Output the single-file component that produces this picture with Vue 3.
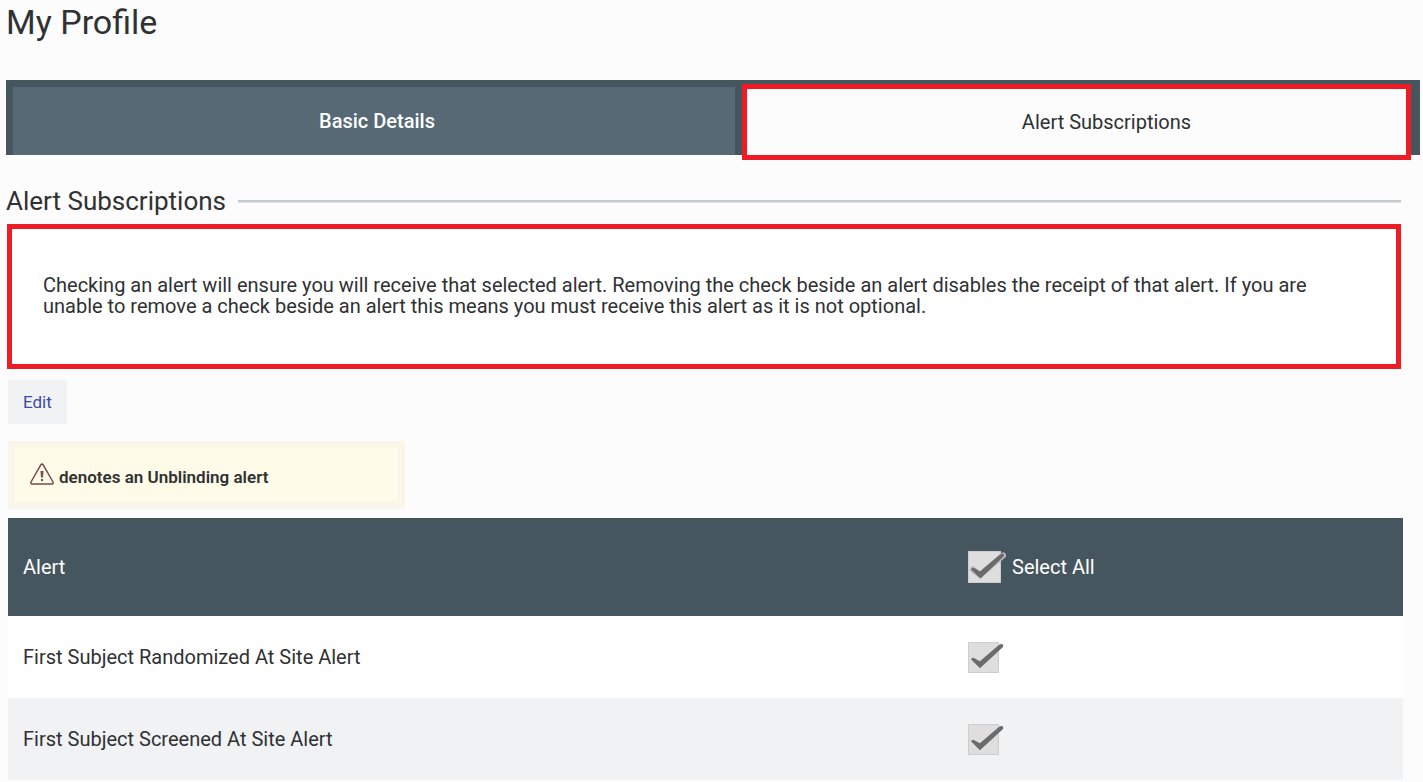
<script setup>
import { ref, computed } from 'vue'

const tabs = ['Basic Details', 'Alert Subscriptions']
const active = ref('Alert Subscriptions')

const alerts = ref([
  { id: 'randomized', name: 'First Subject Randomized At Site Alert', checked: true },
  { id: 'screened', name: 'First Subject Screened At Site Alert', checked: true },
])

const allChecked = computed({
  get: () => alerts.value.every((a) => a.checked),
  set: (value) => alerts.value.forEach((a) => (a.checked = value)),
})
</script>

<template>
  <main class="page">
    <h1>My Profile</h1>

    <nav class="tabs" aria-label="Profile sections">
      <button
        v-for="tab in tabs"
        :key="tab"
        type="button"
        class="tab"
        :class="{ active: tab === active }"
        @click="active = tab"
      >{{ tab }}</button>
    </nav>

    <section class="content">
      <h2>Alert Subscriptions</h2>

      <p class="info">
        Checking an alert will ensure you will receive that selected alert. Removing the check
        beside an alert disables the receipt of that alert. If you are unable to remove a check
        beside an alert this means you must receive this alert as it is not optional.
      </p>

      <button type="button" class="edit">Edit</button>

      <div class="legend">
        <svg viewBox="0 0 24 22" width="24" height="22" aria-hidden="true">
          <path d="M10.8 1.8 Q12 0.2 13.2 1.8 L23 19 Q23.6 20.8 22 20.9 H2 Q0.4 20.8 1 19 Z" fill="none" stroke="#7b4a48" stroke-width="1.5" stroke-linejoin="round" />
          <path d="M10.5 8 H13.5 L13 14.6 H11 Z" fill="#7b4a48" />
          <rect x="11" y="16" width="2" height="2" fill="#7b4a48" />
        </svg>
        <span>denotes an Unblinding alert</span>
      </div>

      <table>
        <thead>
          <tr>
            <th scope="col">Alert</th>
            <th scope="col" class="select">
              <label class="check large">
                <span class="box">
                  <input v-model="allChecked" type="checkbox" />
                  <svg v-if="allChecked" viewBox="0 0 38 32" aria-hidden="true">
                    <path d="M5 18.5 L12 24 L35 4.5" fill="none" stroke="#b5b7b8" stroke-width="6" stroke-linecap="round" />
                    <path d="M3 18.5 Q4.5 15.5 7 17.5 L12 20.5 L32 3.5 Q35 1.5 36 4 Q36 5.5 34.5 6.5 L12.5 27.5 Z" fill="#6b6b6b" />
                  </svg>
                </span>
                <span>Select All</span>
              </label>
            </th>
          </tr>
        </thead>
        <tbody>
          <tr v-for="alert in alerts" :key="alert.id">
            <td><label :for="alert.id">{{ alert.name }}</label></td>
            <td>
              <span class="check">
                <span class="box">
                  <input :id="alert.id" v-model="alert.checked" type="checkbox" />
                  <svg v-if="alert.checked" viewBox="0 0 38 32" aria-hidden="true">
                    <path d="M3 18.5 Q4.5 15.5 7 17.5 L12.5 20.5 L33 3 Q36 1 37.5 3.5 Q37.5 5.5 36 6.5 L12.5 28 Z" fill="#6b6b6b" />
                  </svg>
                </span>
              </span>
            </td>
          </tr>
        </tbody>
      </table>
    </section>
  </main>
</template>

<style>
body {
  margin: 0;
  background: #fcfcfc;
}
</style>

<style scoped>
.page {
  padding: 0 3px 0 6px;
  color: #2f3133;
  font-family: Roboto, "Noto Sans", sans-serif;
  font-size: 20px;
  line-height: 21px;
}
button {
  font: inherit;
  border: 0;
  cursor: pointer;
}
h1 {
  margin: 0;
  padding: 2px 0 38px;
  font-size: 34px;
  line-height: 40px;
  font-weight: 400;
}
.tabs {
  display: grid;
  grid-template-columns: 722fr 669fr;
  gap: 7px;
  padding: 7px 9px 0 7px;
  background: #46565f;
}
.tab {
  min-height: 68px;
  padding: 0 0 0 6px;
  background: #566975;
  color: #fff;
  font-weight: 500;
}
.tab.active {
  margin: -3px 0 -5px;
  padding: 0 0 0 60px;
  border: 5px solid #ee1c24;
  background: #fcfcfc;
  color: #2f3133;
  font-weight: 400;
}
.content {
  padding-top: 30px;
}
h2 {
  display: flex;
  align-items: center;
  gap: 12px;
  margin: 0 19px 7px 0;
  font-size: 26px;
  line-height: 32px;
  font-weight: 400;
}
h2::after {
  content: "";
  flex: 1;
  height: 1px;
  border-top: 1px solid #bfc7c9;
  border-bottom: 1px solid #dedfe2;
  background: #cdd0d2;
}
.info {
  margin: 0 19px 0 1px;
  padding: 46px 31px 47px;
  border: 5px solid #ee1c24;
  background: #fff;
}
.edit {
  display: block;
  margin: 11px 0 17px 2px;
  padding: 0 15px;
  background: #f1f2f4;
  color: #3b4ba3;
  font-size: 17px;
  line-height: 44px;
}
.legend {
  display: flex;
  align-items: center;
  gap: 5px;
  box-sizing: border-box;
  max-width: 397px;
  margin-left: 2px;
  padding: 14px 15px 17px;
  border: 7px solid #faf7ea;
  background: #fefbe9;
  font-size: 17px;
  line-height: 23px;
  font-weight: 600;
}
.legend span {
  padding-top: 4px;
  margin-bottom: -4px;
}
table {
  width: calc(100% - 19px);
  margin: 9px 17px 0 2px;
  border-collapse: collapse;
  table-layout: fixed;
}
th,
td {
  height: 82px;
  padding: 0 15px;
  text-align: left;
  font-weight: 400;
}
th {
  height: 98px;
  background: #46565f;
  color: #fff;
}
.select {
  width: 420px;
}
tbody tr {
  background: #fff;
}
tbody tr:nth-child(even) {
  background: #f1f2f4;
}
.check {
  display: flex;
  align-items: center;
  gap: 11px;
}
.box {
  position: relative;
  display: block;
  width: 31px;
  height: 31px;
}
.large .box {
  width: 33px;
  height: 32px;
}
.box input {
  display: block;
  box-sizing: border-box;
  width: 100%;
  height: 100%;
  margin: 0;
  appearance: none;
  border: 1px solid #cdcdcd;
  background: #dedede;
}
.box svg {
  position: absolute;
  top: 0;
  left: 0;
  width: 36px;
  height: 30px;
  pointer-events: none;
}
.large .box svg {
  width: 38px;
  height: 32px;
}
</style>
